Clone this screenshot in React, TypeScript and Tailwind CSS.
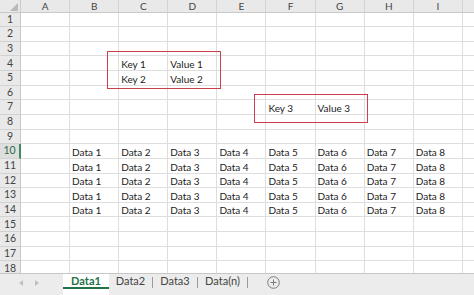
import React from "react";

const cols = ["A", "B", "C", "D", "E", "F", "G", "H", "I", ""];
const rowsCount = 18;

function cellText(r: number, c: number): string {
  if (r === 4 && c === 2) return "Key 1";
  if (r === 4 && c === 3) return "Value 1";
  if (r === 5 && c === 2) return "Key 2";
  if (r === 5 && c === 3) return "Value 2";
  if (r === 7 && c === 5) return "Key 3";
  if (r === 7 && c === 6) return "Value 3";
  if (r >= 10 && r <= 14 && c >= 1 && c <= 8) return `Data ${c}`;
  return "";
}

export default function App() {
  const rows = Array.from({ length: rowsCount }, (_, i) => i + 1);
  return (
    <div
      className="relative w-[474px] h-[295px] overflow-hidden bg-white text-[#222]"
      style={{ fontFamily: "Lato, 'Open Sans', sans-serif" }}
    >
      <div className="h-[273px] overflow-hidden">
        {/* header row */}
        <div className="flex h-[12.5px] bg-[#e9e9e9] border-b border-[#c9c9c9]">
          <div className="relative w-[21px] shrink-0 border-r border-[#c9c9c9]">
            <svg className="absolute right-[2px] bottom-[1px]" width="8" height="8" viewBox="0 0 8 8">
              <polygon points="8,0 8,8 0,8" fill="#b9b9b9" />
            </svg>
          </div>
          {cols.map((c, i) => (
            <div
              key={i}
              className="w-[49.1px] shrink-0 border-r border-[#d4d4d4] flex items-center justify-center text-[10px] leading-none text-[#444]"
            >
              {c}
            </div>
          ))}
        </div>
        {rows.map((r) => (
          <div key={r} className="flex h-[14.65px]">
            <div
              className={`w-[21px] shrink-0 flex items-end justify-center pb-[2px] text-[10.5px] leading-none border-b border-[#d2d2d2] ${
                r === 10
                  ? "bg-[#dedede] text-[#2a6b45] border-r-2 border-r-[#3f8a5e]"
                  : "bg-[#e9e9e9] text-[#444] border-r border-r-[#c9c9c9]"
              }`}
            >
              {r}
            </div>
            {cols.map((_, c) => (
              <div
                key={c}
                className="w-[49.1px] shrink-0 border-r border-b border-[#dedede] flex items-end pl-[2px] pb-[1px] text-[10px] leading-none whitespace-nowrap"
              >
                {cellText(r, c)}
              </div>
            ))}
          </div>
        ))}
      </div>

      {/* red boxes */}
      <div className="absolute left-[107px] top-[51px] w-[114px] h-[38px] border-[1.5px] border-[#c9404c]" />
      <div className="absolute left-[254px] top-[94px] w-[114px] h-[29px] border-[1.5px] border-[#c9404c]" />

      {/* sheet tabs */}
      <div className="flex items-stretch h-[22px] bg-[#ececec] border-t border-[#c6c6c6] text-[11px] leading-none">
        <div className="w-[63px] shrink-0 flex items-start pt-[6px] pl-[19px] gap-[12px]">
          <svg width="4" height="6" viewBox="0 0 4 6"><polygon points="4,0 4,6 0,3" fill="#c0c0c0" /></svg>
          <svg width="4" height="6" viewBox="0 0 4 6"><polygon points="0,0 0,6 4,3" fill="#c0c0c0" /></svg>
        </div>
        <div className="relative w-[46px] shrink-0 bg-white flex justify-center pt-[1px] font-bold text-[#217346]">
          Data1
          <div className="absolute left-0 right-0 top-[13px] h-[2px] bg-[#217346]" />
        </div>
        <div className="flex items-start pt-[1px] text-[#444]">
          <span className="w-[43px] text-center">Data2</span>
          <span className="w-px h-[11px] mt-[2px] bg-[#9a9a9a]" />
          <span className="w-[44px] text-center">Data3</span>
          <span className="w-px h-[11px] mt-[2px] bg-[#9a9a9a]" />
          <span className="w-[49px] text-center">Data(n)</span>
          <span className="w-px h-[11px] mt-[2px] bg-[#9a9a9a]" />
          <span className="ml-[19px] mt-[1px]">
            <svg width="13" height="13" viewBox="0 0 13 13">
              <circle cx="6.5" cy="6.5" r="5.8" fill="none" stroke="#7a7a7a" strokeWidth="1" />
              <line x1="6.5" y1="3.5" x2="6.5" y2="9.5" stroke="#7a7a7a" strokeWidth="1" />
              <line x1="3.5" y1="6.5" x2="9.5" y2="6.5" stroke="#7a7a7a" strokeWidth="1" />
            </svg>
          </span>
        </div>
      </div>
    </div>
  );
}
